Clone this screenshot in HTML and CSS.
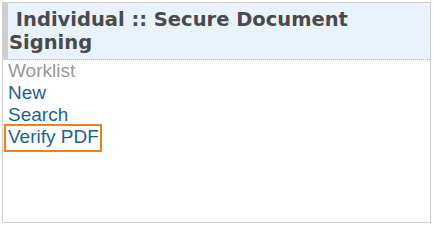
FILE: index.html
```html
<!DOCTYPE html>
<html lang="en">
<head>
    <meta charset="UTF-8">
    <title>Individual :: Secure Document Signing</title>
    <link rel="stylesheet" href="styles.css">
</head>
<body>

<div class="panel">
    <h2 class="panel-title">&nbsp;Individual :: Secure Document Signing</h2>
    <ul class="menu">
        <li><span class="current">Worklist</span></li>
        <li><a href="#">New</a></li>
        <li><a href="#">Search</a></li>
        <li><a href="#" class="focused">Verify PDF</a></li>
    </ul>
</div>

</body>
</html>
```

FILE: styles.css
```css
body {
    margin: 0;
    padding: 2px;
    background: white;
    font-family: "Liberation Sans", Arial, sans-serif;
}
.panel {
    border: 1px solid #cfcfcf;
    height: 221px;
    box-sizing: border-box;
}
.panel-title {
    margin: 0;
    padding: 5px 20px 5px 1px;
    background-color: #eaf2fd;
    border-left: 5px solid #cfcfcf;
    border-bottom: 1px dotted #bbb;
    font-family: "DejaVu Sans", Verdana, sans-serif;
    font-size: 19.5px;
    line-height: 23px;
    color: #4a4a4a;
}
.menu {
    list-style: none;
    margin: 0;
    padding: 0 0 0 5px;
    font-size: 19px;
}
.menu a {
    color: #1f5f99;
    text-decoration: none;
}
.current {
    color: #999;
}
/* foco del teclado */
.menu a.focused {
    border: 2px solid #f0801e;
    padding: 0 1px 3px 2px;
    margin-left: -4px;
}
```
